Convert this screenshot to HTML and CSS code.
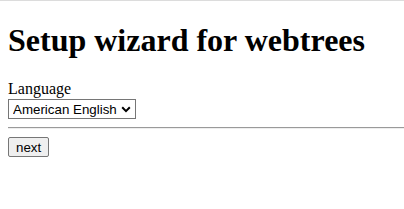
FILE: index.html
```html
<!DOCTYPE html>
<html lang="en">
<head>
    <meta charset="UTF-8">
    <meta name="viewport" content="width=device-width, initial-scale=1.0">
    <title>Setup wizard for webtrees</title>
    <link rel="stylesheet" href="styles.css">
</head>
<body>
    <h1>Setup wizard for webtrees</h1>
    <form class="wizard">
        <label for="lang">Language</label><br>
        <select id="lang" name="lang" class="lang-select">
            <option value="en-US" selected>American English</option>
            <option value="en-GB">British English</option>
            <option value="de">Deutsch</option>
            <option value="fr">français</option>
        </select>
        <hr class="divider">
        <button type="submit" class="next-button">next</button>
    </form>
</body>
</html>
```

FILE: styles.css
```css
html {
    border-top: 1px solid #dcdcdc;
}
body {
    margin: 0 0 8px 8px;
    font-family: "Liberation Serif", "Times New Roman", serif;
    font-size: 16px;
    color: #000;
    background: #fff;
}
h1 {
    font-size: 32px;
    font-weight: bold;
    margin: 21px 0;
}
.wizard {
    margin: 0;
}
.lang-select {
    -webkit-appearance: none;
    appearance: none;
    box-sizing: border-box;
    width: 128px;
    height: 20px;
    margin: 1px 0 0;
    padding: 0 0 0 4px;
    border: 1px solid #767676;
    border-radius: 0;
    background: #fff url("data:image/svg+xml,%3Csvg xmlns='http://www.w3.org/2000/svg' width='10' height='7' viewBox='0 0 10 7'%3E%3Cpath d='M1.2 1.3l3.8 3.8 3.8-3.8' fill='none' stroke='%23000' stroke-width='2'/%3E%3C/svg%3E") no-repeat right 4px center;
    font-family: "Liberation Sans", Arial, sans-serif;
    font-size: 13.33px;
    color: #000;
    vertical-align: top;
}
.divider {
    margin: 8px 0;
    border: none;
    border-top: 1px solid #9a9a9a;
    border-bottom: 1px solid #eeeeee;
}
.next-button {
    box-sizing: border-box;
    height: 20px;
    padding: 0 7px;
    border: 1px solid #767676;
    border-radius: 2px;
    background: #efefef;
    font-family: "Liberation Sans", Arial, sans-serif;
    font-size: 13.33px;
    color: #000;
}
```
